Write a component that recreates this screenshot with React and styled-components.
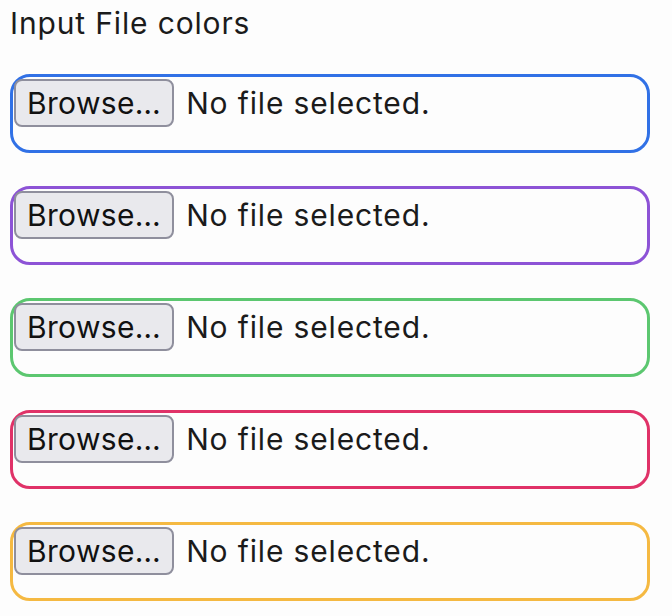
import React from "react";
import styled, { createGlobalStyle } from "styled-components";

const GlobalStyle = createGlobalStyle`
  body {
    margin: 0;
    background: #fdfdfd;
    font-family: Inter, "Noto Sans", sans-serif;
    color: #1b1b1b;
  }
`;

const colors = ["#3171e6", "#8d53d6", "#5cc770", "#e03268", "#f5b942"];

const FileInputs = () => {
  return (
    <Wrapper>
      <h2>Input File colors</h2>
      <div className="list">
        {colors.map((color) => {
          return (
            <FileBox key={color} $color={color}>
              <input type="file" />
              <span className="browse">Browse…</span>
              <span className="status">No file selected.</span>
            </FileBox>
          );
        })}
      </div>
    </Wrapper>
  );
};

const Wrapper = styled.div`
  padding: 4px 10px;

  h2 {
    margin: 0;
    font-size: 30px;
    font-weight: 400;
    letter-spacing: 0.85px;
    line-height: 38px;
    color: #1b1b1b;
  }
  .list {
    margin-top: 32px;
    display: flex;
    flex-direction: column;
    gap: 33px;
  }
`;

const FileBox = styled.label`
  box-sizing: border-box;
  width: 640px;
  height: 79px;
  padding: 2px 1px;
  display: flex;
  align-items: flex-start;
  gap: 12px;
  border: 3px solid ${(props) => props.$color};
  border-radius: 20px;
  cursor: pointer;

  input {
    display: none;
  }
  .browse {
    box-sizing: border-box;
    height: 48px;
    padding: 0 11px;
    display: flex;
    align-items: center;
    font-size: 30px;
    letter-spacing: 0.35px;
    color: #111;
    background-color: #e9e9ed;
    border: 2px solid #8f8f9d;
    border-radius: 8px;
  }
  .status {
    font-size: 30px;
    letter-spacing: 0.85px;
    line-height: 48px;
    color: #1b1b1b;
  }
`;

const App = () => {
  return (
    <>
      <GlobalStyle />
      <FileInputs />
    </>
  );
};

export default App;
